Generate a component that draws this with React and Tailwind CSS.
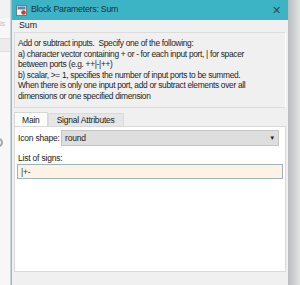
import { useState } from "react";

function TitleIcon() {
  return (
    <svg width="11" height="11" viewBox="0 0 11 11">
      <rect x="0.5" y="0.5" width="10" height="10" fill="#f4f4f4" stroke="#6b7f86" />
      <rect x="1.5" y="1.5" width="8" height="3" fill="#5b87a8" />
      <circle cx="7.5" cy="7.5" r="2.3" fill="#d33b2c" />
    </svg>
  );
}

export default function App() {
  const [signs, setSigns] = useState("|+-");
  const [tab, setTab] = useState("main");

  return (
    <div
      className="flex w-[300px] h-[285px] overflow-hidden bg-[#dcdcdc] text-[#1a1a1a]"
      style={{ fontFamily: "'Liberation Sans', Arial, sans-serif" }}
    >
      {/* background model window peeking on the left */}
      <div className="w-[11px] shrink-0 flex flex-col bg-[#f7f7f7] border-r border-[#c9d6dc] overflow-hidden">
        <div className="h-[18px] bg-[#f2f2f2]" />
        <div className="text-[7px] text-[#bdbdbd] leading-[12px] whitespace-nowrap">is</div>
        <div className="mt-[8px] h-[14px] border-t border-b border-[#e0e0e0] bg-[#ececec]" />
        <div className="mt-[86px] ml-[-6px] w-[9px] h-[9px] rounded-full border-2 border-[#9aa7ad]" />
      </div>

      {/* dialog */}
      <div className="w-[277px] shrink-0 flex flex-col bg-[#f0f0f0] border-l border-[#7fc3d0]">
        <div className="h-[20px] flex items-center bg-[#3db4c6] pl-[4px] pr-[7px]">
          <TitleIcon />
          <span className="ml-[4px] text-[8.8px] tracking-[-0.25px] text-[#17323c]">Block Parameters: Sum</span>
          <span className="ml-auto text-[#2a4a56] text-[11px] leading-none">✕</span>
        </div>

        <div className="flex-1 flex flex-col px-[2px]">
          <div className="text-[8.8px] leading-[11px] pl-[5px]">Sum</div>
          <div className="mt-[1px] h-[76px] border border-[#dcdcdc] border-r-white bg-[#f0f0f0] px-[3px] pt-[5px] text-[8.4px] tracking-[-0.32px] leading-[10.6px] text-[#1e1e1e] whitespace-nowrap">
            <div>Add or subtract inputs.&nbsp; Specify one of the following:</div>
            <div>a) character vector containing + or - for each input port, | for spacer</div>
            <div>between ports (e.g. ++|-|++)</div>
            <div>b) scalar, &gt;= 1, specifies the number of input ports to be summed.</div>
            <div>When there is only one input port, add or subtract elements over all</div>
            <div>dimensions or one specified dimension</div>
          </div>

          <div className="mt-[4px] flex items-end h-[14px] text-[8.5px] tracking-[-0.2px] whitespace-nowrap">
            <button
              onClick={() => setTab("main")}
              className={`h-[14px] px-[7px] leading-[14px] ${tab === "main" ? "bg-white border border-b-0 border-[#d6d6d6]" : "bg-[#e8e8e8]"}`}
            >
              Main
            </button>
            <button
              onClick={() => setTab("signal")}
              className={`h-[13px] px-[8px] leading-[13px] ${tab === "signal" ? "bg-white border border-b-0 border-[#d6d6d6]" : "bg-[#e6e6e6] border border-b-0 border-[#dadada]"}`}
            >
              Signal Attributes
            </button>
          </div>

          <div className="h-[146px] bg-white border border-[#d9d9d9] px-[2px] pt-[3px] text-[8.5px] tracking-[-0.2px]">
            <div className="flex items-center h-[16px]">
              <span className="w-[44px] shrink-0 whitespace-nowrap pl-[1px]">Icon shape:</span>
              <div className="flex-1 h-[16px] flex items-center bg-[#dedede] border border-[#c4c4c4] px-[3px] mr-[4px]">
                <span>round</span>
                <span className="ml-auto text-[6px] text-[#222]">▼</span>
              </div>
            </div>
            <div className="mt-[7px] leading-[10px] pl-[1px]">List of signs:</div>
            <input
              value={signs}
              onChange={(e) => setSigns(e.target.value)}
              className="mt-[1px] block w-[266px] h-[15px] bg-[#fdf3e4] border border-[#9fb3bb] px-[3px] text-[8.5px] text-[#333] outline-none"
            />
          </div>
          <div className="flex-1" />
        </div>
      </div>

      {/* shadow */}
      <div className="flex-1 bg-gradient-to-r from-[#b9bcbd] to-[#e3e3e3]" />
    </div>
  );
}
